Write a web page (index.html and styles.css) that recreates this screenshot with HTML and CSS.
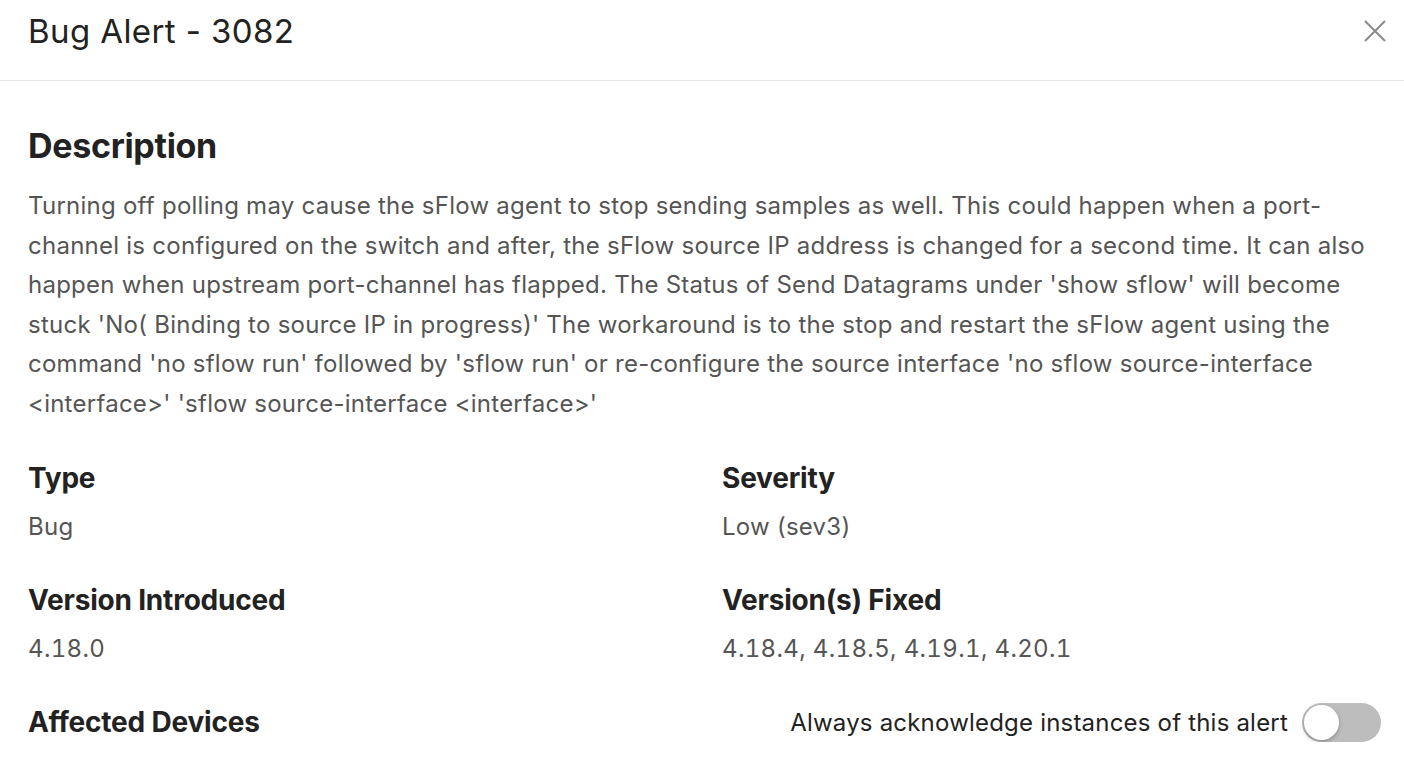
FILE: index.html
```html
<!DOCTYPE html>
<html lang="en">
<head>
<meta charset="utf-8">
<title>Bug Alert - 3082</title>
<link rel="stylesheet" href="styles.css">
</head>
<body>
<div class="modal">
  <header class="modal-header">
    <h1 class="modal-title">Bug Alert - 3082</h1>
    <button class="close-btn" aria-label="Close">
      <svg width="22" height="22" viewBox="0 0 22 22"><path d="M1 1L21 21M21 1L1 21" stroke="#8a8a8a" stroke-width="2" fill="none"/></svg>
    </button>
  </header>
  <main class="modal-body">
    <h2 class="section-title">Description</h2>
    <p class="description">Turning off polling may cause the sFlow agent to stop sending samples as well. This could happen when a port-channel is configured on the switch and after, the sFlow source IP address is changed for a second time. It can also happen when upstream port-channel has flapped. The Status of Send Datagrams under 'show sflow' will become stuck 'No( Binding to source IP in progress)' The workaround is to the stop and restart the sFlow agent using the command 'no sflow run' followed by 'sflow run' or re-configure the source interface 'no sflow source-interface &lt;interface&gt;' 'sflow source-interface &lt;interface&gt;'</p>
    <div class="fields">
      <div class="field">
        <div class="label">Type</div>
        <div class="value">Bug</div>
      </div>
      <div class="field">
        <div class="label">Severity</div>
        <div class="value">Low (sev3)</div>
      </div>
      <div class="field">
        <div class="label">Version Introduced</div>
        <div class="value num">4.18.0</div>
      </div>
      <div class="field">
        <div class="label">Version(s) Fixed</div>
        <div class="value num">4.18.4, 4.18.5, 4.19.1, 4.20.1</div>
      </div>
    </div>
    <div class="devices-row">
      <div class="label">Affected Devices</div>
      <label class="ack">
        <span class="ack-text">Always acknowledge instances of this alert</span>
        <span class="toggle"><span class="knob"></span></span>
      </label>
    </div>
  </main>
</div>
</body>
</html>
```
FILE: styles.css
```css
* { box-sizing: border-box; }
html, body { margin: 0; padding: 0; background: #fff; }
body {
  font-family: Inter, "Noto Sans", "Liberation Sans", sans-serif;
  color: #222;
  overflow: hidden;
}
.modal { width: 1404px; }
.modal-header {
  height: 81px;
  border-bottom: 1px solid #e6e6e6;
  display: flex;
  align-items: center;
  justify-content: space-between;
  padding: 0 18px 0 28px;
}
.modal-title {
  margin: 0;
  font-size: 33px;
  font-weight: 400;
  color: #222;
  letter-spacing: 0.4px;
  position: relative;
  top: -9px;
}
.close-btn {
  border: 0;
  background: none;
  padding: 0;
  width: 22px;
  height: 22px;
  cursor: pointer;
  position: relative;
  top: -9px;
}
.modal-body { padding: 42px 20px 0 28px; }
.section-title {
  margin: 0 0 17px;
  font-size: 34px;
  font-weight: 700;
  color: #222;
  line-height: 46px;
  letter-spacing: -0.3px;
}
.description {
  margin: 0;
  font-size: 24px;
  line-height: 39.6px;
  letter-spacing: 0.25px;
  color: #555;
}
.fields {
  margin-top: 36px;
  display: grid;
  grid-template-columns: 694px 1fr;
  row-gap: 39px;
}
.label {
  font-size: 28px;
  font-weight: 700;
  color: #222;
  line-height: 36px;
  letter-spacing: -0.2px;
}
.value {
  margin-top: 15px;
  font-size: 24px;
  color: #555;
  line-height: 32px;
  letter-spacing: 0.25px;
}
.value.num {
  font-variant-numeric: tabular-nums;
  letter-spacing: 0.35px;
}
.devices-row {
  margin-top: 38px;
  display: flex;
  align-items: center;
  justify-content: space-between;
  margin-right: 3px;
}
.ack {
  display: flex;
  align-items: center;
  gap: 14px;
}
.ack-text { font-size: 24px; color: #222; letter-spacing: 0.2px; }
.toggle {
  width: 79px;
  height: 39px;
  border-radius: 20px;
  background: #bdbdbd;
  position: relative;
  display: inline-block;
}
.knob {
  position: absolute;
  left: 2px;
  top: 2px;
  width: 35px;
  height: 35px;
  border-radius: 50%;
  background: #fff;
  box-shadow: 0 2px 4px rgba(0,0,0,0.25);
}
```
